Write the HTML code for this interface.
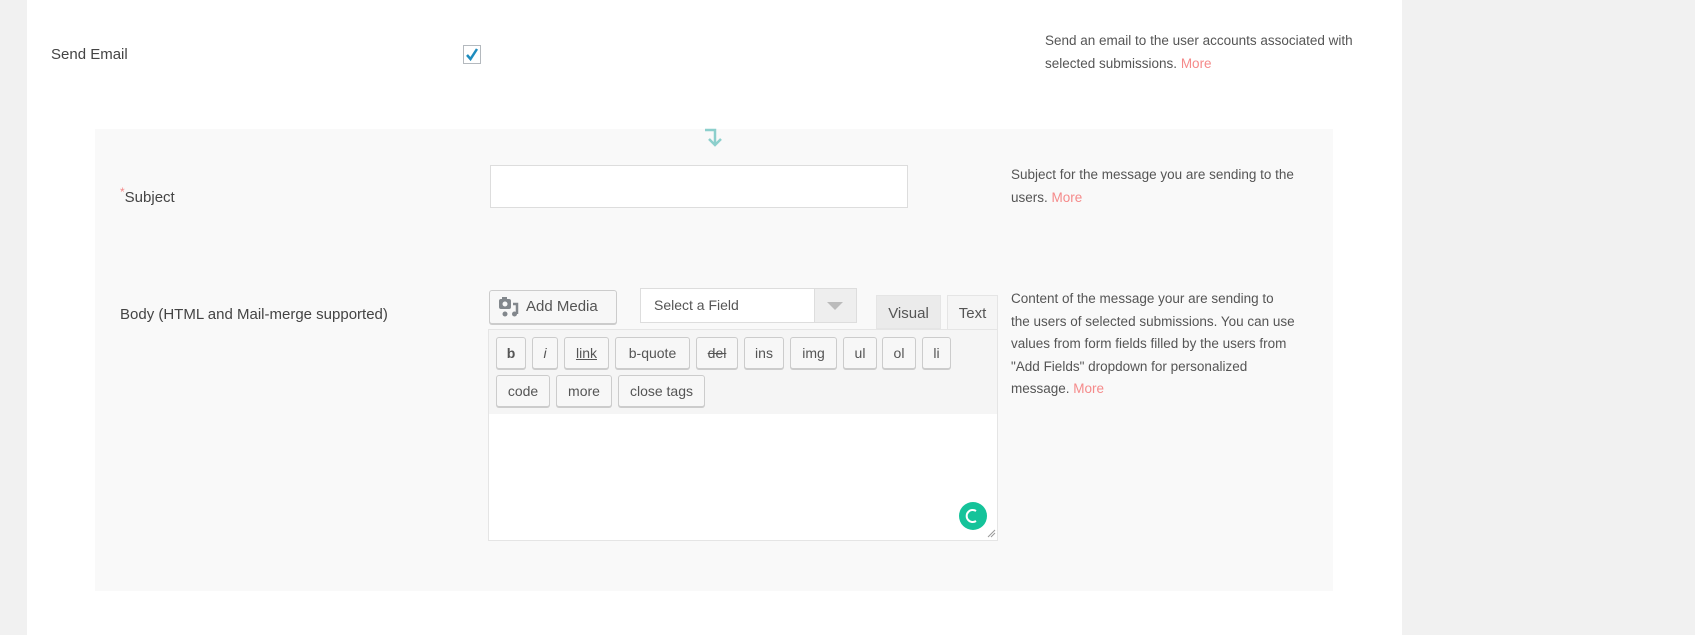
<!DOCTYPE html>
<html><head><meta charset="utf-8"><style>
*{box-sizing:border-box;margin:0;padding:0}
body{width:1695px;height:635px;background:#f1f1f1;font-family:"Liberation Sans",sans-serif;position:relative;overflow:hidden;color:#444}
.abs{position:absolute}
#main{left:27px;top:0;width:1375px;height:635px;background:#fff}
.lbl{font-size:15px;color:#444}
.desc{font-size:13.5px;color:#555;line-height:22.6px;font-weight:300}
.more{color:#f58a8a}
#panel{left:95px;top:129px;width:1238px;height:462px;background:#f9f9f9}
.btn{position:absolute;height:32px;border:1px solid #ccc;border-radius:3px;background:#f7f7f7;box-shadow:0 1px 0 #ccc;font-size:14px;color:#555;text-align:center;line-height:30px}
</style></head><body>
<div id="main" class="abs"></div>
<div class="abs lbl" style="left:51px;top:46px">Send Email</div>
<div class="abs" style="left:463px;top:45px;width:18px;height:19px;border:1px solid #b4b9be;background:#fff">
<svg width="16" height="17" viewBox="0 0 16 17"><path d="M3 9 L6.5 13 L13 3" stroke="#1e8cbe" stroke-width="2.5" fill="none"/></svg></div>
<div class="abs desc" style="left:1045px;top:30px;width:340px">Send an email to the user accounts associated with selected submissions. <span class="more">More</span></div>
<div id="panel" class="abs"></div>
<svg class="abs" style="left:703px;top:128px" width="22" height="20" viewBox="0 0 22 20"><path d="M2 2 H12 V16 M6 11 L12 17 L18 11" stroke="#8ccfcc" stroke-width="2.5" fill="none"/></svg>
<div class="abs lbl" style="left:120px;top:185px"><sup style="color:#f58a8a;font-size:12px">*</sup>Subject</div>
<div class="abs" style="left:490px;top:165px;width:418px;height:43px;background:#fff;border:1px solid #ddd"></div>
<div class="abs desc" style="left:1011px;top:164px;width:310px">Subject for the message you are sending to the users. <span class="more">More</span></div>
<div class="abs lbl" style="left:120px;top:306px">Body (HTML and Mail-merge supported)</div>
<div class="btn" style="left:489px;top:290px;width:128px;height:34px;line-height:32px;font-size:15px;text-align:left;padding-left:36px">Add Media</div>
<svg class="abs" style="left:498px;top:296px" width="22" height="22" viewBox="0 0 22 22"><rect x="1" y="3" width="12" height="10" rx="2" fill="#82878c"/><rect x="4" y="1" width="5" height="3" fill="#82878c"/><circle cx="7" cy="8" r="2.5" fill="#f7f7f7"/><path d="M15 8 H19 V18" stroke="#82878c" stroke-width="2.5" fill="none"/><circle cx="16.5" cy="18" r="2.5" fill="#82878c"/><circle cx="7" cy="18" r="2.5" fill="#82878c"/></svg>
<div class="abs" style="left:640px;top:288px;width:217px;height:35px;border:1px solid #ddd;background:#fff;font-size:14px;color:#555;line-height:33px;padding-left:13px">Select a Field</div>
<div class="abs" style="left:814px;top:289px;width:42px;height:33px;background:#eee;border-left:1px solid #ddd"></div>
<svg class="abs" style="left:826px;top:301px" width="18" height="10"><path d="M1 1 H17 L9 9Z" fill="#bbb"/></svg>
<div class="abs" style="left:876px;top:295px;width:65px;height:34px;background:#ebebeb;border:1px solid #e5e5e5;font-size:15px;color:#555;text-align:center;line-height:36px">Visual</div>
<div class="abs" style="left:947px;top:295px;width:51px;height:34px;background:#f5f5f5;border:1px solid #e5e5e5;border-bottom:none;font-size:15px;color:#555;text-align:center;line-height:36px">Text</div>
<div class="abs" style="left:488px;top:329px;width:510px;height:212px;background:#fff;border:1px solid #e5e5e5"></div>
<div class="abs" style="left:489px;top:330px;width:508px;height:84px;background:#f5f5f5"></div>
<div class="btn" style="left:496px;top:337px;width:30px;font-weight:bold">b</div>
<div class="btn" style="left:532px;top:337px;width:26px;font-style:italic">i</div>
<div class="btn" style="left:564px;top:337px;width:45px;text-decoration:underline">link</div>
<div class="btn" style="left:615px;top:337px;width:75px">b-quote</div>
<div class="btn" style="left:696px;top:337px;width:42px;text-decoration:line-through">del</div>
<div class="btn" style="left:744px;top:337px;width:40px">ins</div>
<div class="btn" style="left:790px;top:337px;width:47px">img</div>
<div class="btn" style="left:843px;top:337px;width:34px">ul</div>
<div class="btn" style="left:882px;top:337px;width:34px">ol</div>
<div class="btn" style="left:922px;top:337px;width:29px">li</div>
<div class="btn" style="left:496px;top:375px;width:54px">code</div>
<div class="btn" style="left:556px;top:375px;width:56px">more</div>
<div class="btn" style="left:618px;top:375px;width:87px">close tags</div>
<div class="abs" style="left:959px;top:502px;width:28px;height:28px;border-radius:50%;background:#15c39a"></div>
<svg class="abs" style="left:959px;top:502px" width="28" height="28"><path d="M17 9 A6 6 0 1 0 17 19" stroke="#fff" stroke-width="2" fill="none"/></svg>
<svg class="abs" style="left:987px;top:529px" width="9" height="9"><path d="M1 8 L8 1 M4 8 L8 4" stroke="#999" stroke-width="1"/></svg>
<div class="abs desc" style="left:1011px;top:288px;width:285px">Content of the message your are sending to the users of selected submissions. You can use values from form fields filled by the users from "Add Fields" dropdown for personalized message. <span class="more">More</span></div>
</body></html>
